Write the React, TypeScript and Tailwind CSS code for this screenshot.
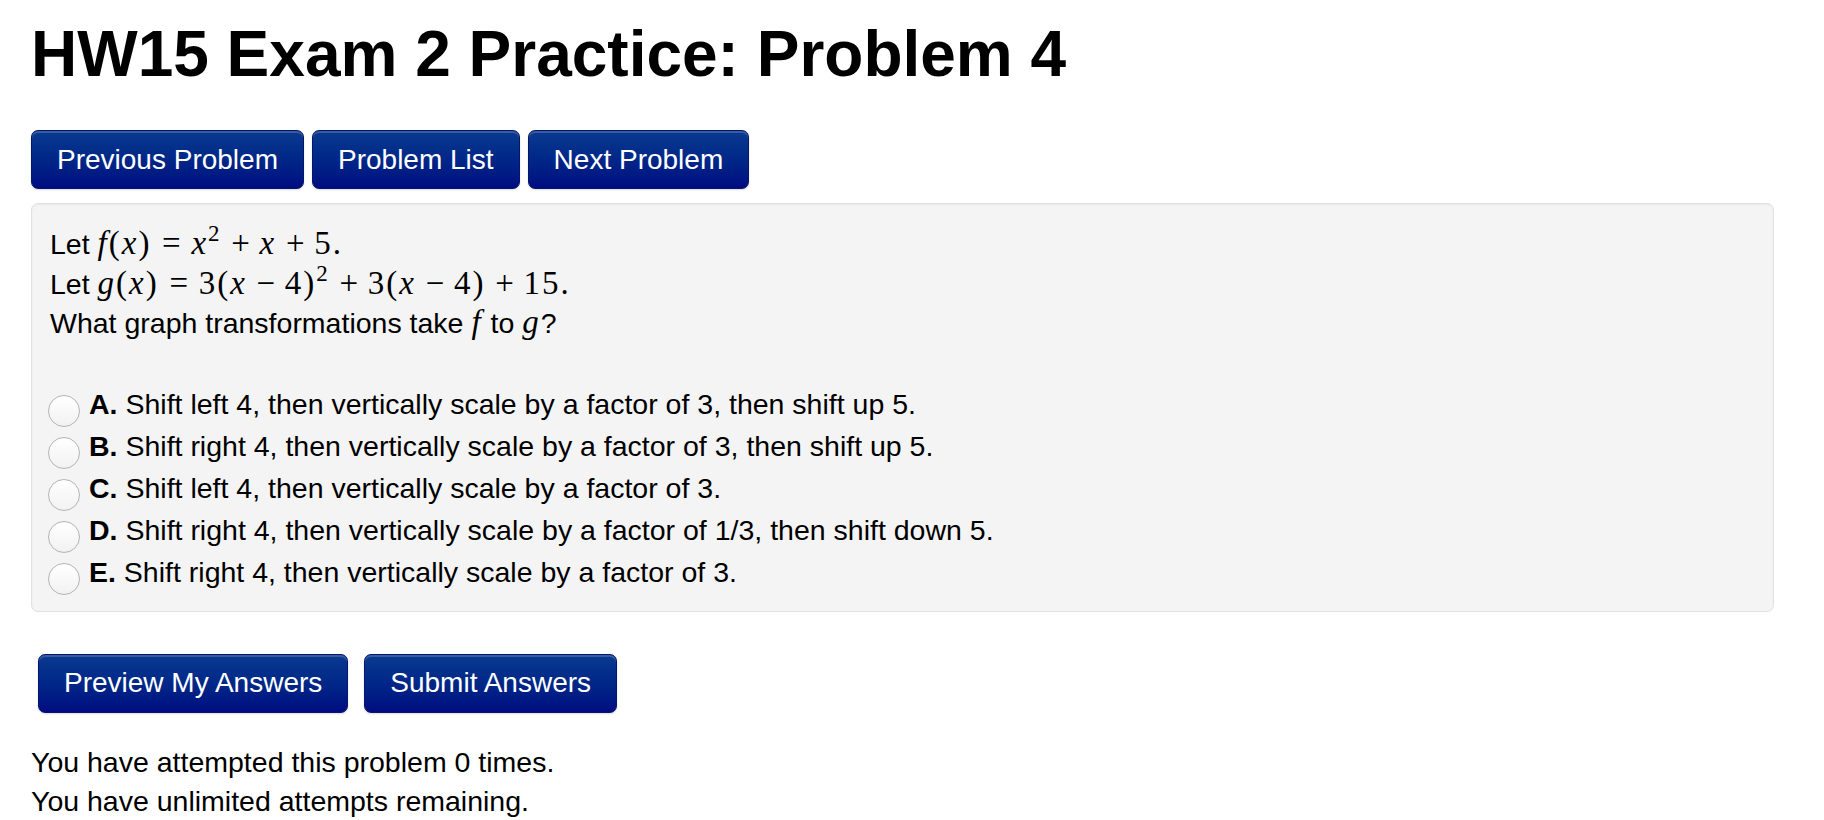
import type { ReactNode } from 'react';

const options = [
  { key: 'A', text: 'Shift left 4, then vertically scale by a factor of 3, then shift up 5.' },
  { key: 'B', text: 'Shift right 4, then vertically scale by a factor of 3, then shift up 5.' },
  { key: 'C', text: 'Shift left 4, then vertically scale by a factor of 3.' },
  { key: 'D', text: 'Shift right 4, then vertically scale by a factor of 1/3, then shift down 5.' },
  { key: 'E', text: 'Shift right 4, then vertically scale by a factor of 3.' },
];

const NavButton = ({ children }: { children: ReactNode }) => (
  <button className="h-[59px] px-[25px] rounded-[7px] border border-[#06166e] bg-gradient-to-b from-[#0c3a8f] to-[#000a80] text-white text-[28px] leading-none shadow-[inset_0_2px_0_rgba(255,255,255,0.18),0_1px_2px_rgba(0,0,0,0.15)]">
    {children}
  </button>
);

// MathJax-ish bits
const M = ({ children }: { children: ReactNode }) => (
  <span className="font-['Liberation_Serif',serif] text-[33px] leading-none tracking-[2px]">{children}</span>
);
const V = ({ children }: { children: ReactNode }) => <i>{children}</i>;
const Rel = ({ children }: { children: ReactNode }) => (
  <span className="inline-block w-[40px] text-center tracking-normal">{children}</span>
);
const Bin = ({ children }: { children: ReactNode }) => (
  <span className="inline-block w-[38px] text-center tracking-normal">{children}</span>
);
const Sq = () => <sup className="text-[23px] top-[-13px]">2</sup>;

const App = () => {
  return (
    <div className="min-h-screen bg-white text-black font-['Liberation_Sans',Arial,sans-serif] pl-[31px] pr-[50px] pt-[18px]">
      <h1 className="text-[64px] font-bold leading-[72px]">HW15 Exam 2 Practice: Problem 4</h1>

      {/* Problem navigation */}
      <div className="flex gap-[8px] mt-[40px]">
        <NavButton>Previous Problem</NavButton>
        <NavButton>Problem List</NavButton>
        <NavButton>Next Problem</NavButton>
      </div>

      {/* Problem body */}
      <div className="mt-[14px] bg-[#f4f4f4] border border-[#e1e1e1] rounded-[7px] shadow-[inset_0_1px_2px_rgba(0,0,0,0.05)] pl-[18px] pr-4 pt-[21px] pb-[18px] text-[28.5px] leading-[39.5px]">
        <div>
          Let{' '}
          <M>
            <V>f</V>(<V>x</V>)<Rel>=</Rel><V>x</V>
            <Sq />
            <Bin>+</Bin><V>x</V><Bin>+</Bin>5.
          </M>
        </div>
        <div>
          Let{' '}
          <M>
            <V>g</V>(<V>x</V>)<Rel>=</Rel>3(<V>x</V><Bin>−</Bin>4)
            <Sq />
            <Bin>+</Bin>3(<V>x</V><Bin>−</Bin>4)<Bin>+</Bin>15.
          </M>
        </div>
        <div>
          What graph transformations take{' '}
          <M>
            <V>f</V>
          </M>{' '}
          to{' '}
          <M>
            <V>g</V>
          </M>
          ?
        </div>

        <div className="mt-[39px]">
          {options.map((o) => (
            <label key={o.key} className="flex items-start h-[42px] leading-[42px]">
              <span className="mt-[12px] ml-[-2px] mr-[9px] w-[32px] h-[32px] shrink-0 rounded-full border border-[#b4b4b4] bg-gradient-to-b from-white to-[#f2f2f2]" />
              <span>
                <b>{o.key}.</b> {o.text}
              </span>
            </label>
          ))}
        </div>
      </div>

      {/* Submit */}
      <div className="flex gap-[16px] mt-[42px] ml-[7px]">
        <NavButton>Preview My Answers</NavButton>
        <NavButton>Submit Answers</NavButton>
      </div>

      <div className="mt-[30px] text-[28.5px] leading-[39.5px]">
        <div>You have attempted this problem 0 times.</div>
        <div>You have unlimited attempts remaining.</div>
      </div>
    </div>
  );
};

export default App;
